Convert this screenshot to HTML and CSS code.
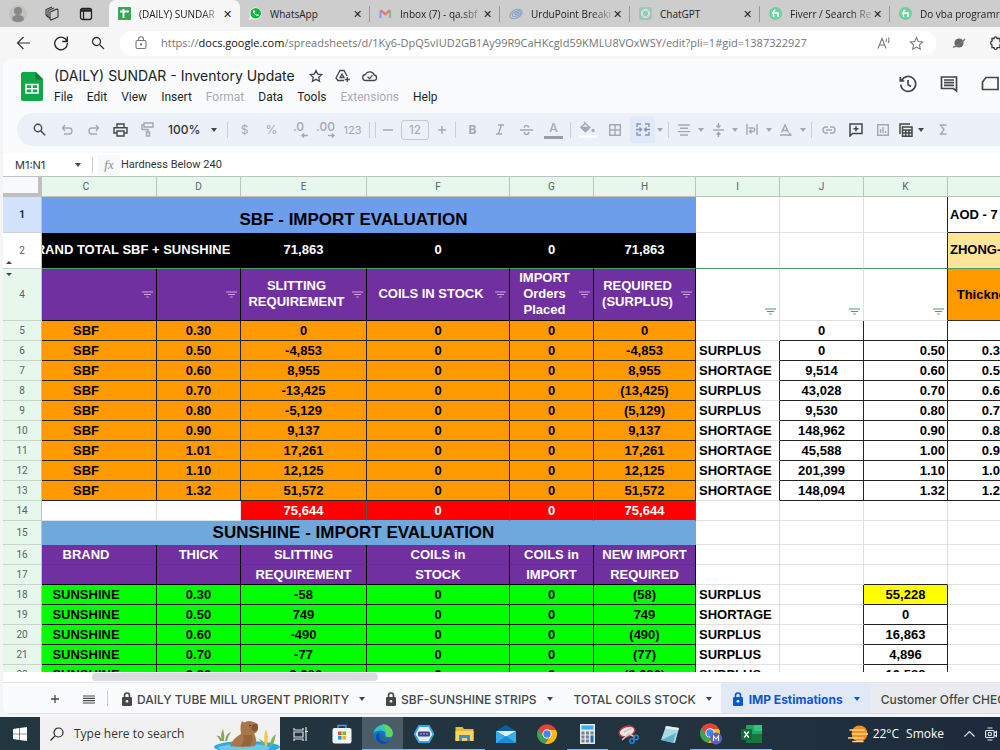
FILE: index.html
```html
<!DOCTYPE html>
<html lang="en">
<head>
<meta charset="utf-8">
<title>(DAILY) SUNDAR - Inventory Update</title>
<link rel="stylesheet" href="styles.css">
</head>
<body>
<div class="tabstrip">
  <button class="win-btn" aria-label="Profile"><svg width="18" height="18" viewBox="0 0 18 18"><circle cx="9" cy="9" r="9" fill="#c3c1be"/><circle cx="9" cy="6" r="4" fill="#8b8784"/><path d="M3 14a6 4 0 0 1 12 0q-1 3-6 3t-6-3z" fill="#8b8784"/></svg></button>
  <button class="win-btn" aria-label="Workspaces"><svg width="16" height="16" viewBox="0 0 16 16" fill="none" stroke="#333" stroke-width="1.1"><path d="M6 6l7-3 1 1v7l-7 3-1-1z"/><path d="M4 11V4.500l6-2.500M2 9V3.500L8 1"/><path d="M2 9l2 2 2 1"/></svg></button>
  <button class="win-btn" aria-label="Tab actions"><svg width="14" height="14" viewBox="0 0 14 14" fill="none" stroke="#222" stroke-width="1.300"><rect x="1.500" y="1.500" width="11" height="11" rx="2"/><path d="M1.500 3.500h11" stroke-width="2.500"/><path d="M4.500 4v8"/></svg></button>
  <div class="tab tab-active"><svg width="13" height="13" viewBox="0 0 13 13"><rect width="13" height="13" rx="1" fill="#34a853"/><path d="M2 4.500h9M5.500 2v9" stroke="#fff" stroke-width="1.800"/></svg><span class="tab-title">(DAILY) SUNDAR</span><button class="close" aria-label="Close tab">✕</button></div>
  <div class="tab"><svg width="13" height="13" viewBox="0 0 13 13"><path d="M0 13l1-4a6 6 0 1 1 3 3z" fill="#fff"/><circle cx="6.700" cy="6.300" r="5.300" fill="#0fb53c"/><path d="M4.500 3.500q-1.500 1.500 1 3.700t4 1.800l.3-1.200-1.500-.7-.8.700q-1.500-.6-2-2l.6-.8-.5-1.500z" fill="#fff"/></svg><span class="tab-title whole">WhatsApp</span><button class="close" aria-label="Close tab">✕</button></div>
  <div class="tab"><svg width="13" height="13" viewBox="0 0 13 13" fill="none" stroke-width="2.200"><path d="M1.500 11V3.500" stroke="#7aa7ea"/><path d="M11 11V3.500" stroke="#7cc08c"/><path d="M1.500 3.200l4.800 4 4.700-4" stroke="#e6796f"/></svg><span class="tab-title">Inbox (7) - qa.sbf</span><button class="close" aria-label="Close tab">✕</button></div>
  <div class="tab"><svg width="14" height="12" viewBox="0 0 14 12" fill="none" stroke="#8fa4cb" stroke-width="1.200"><g transform="rotate(-30 7 6)"><ellipse cx="7" cy="6" rx="6.500" ry="4"/><ellipse cx="7.500" cy="6" rx="4.500" ry="2.300"/><ellipse cx="8" cy="6" rx="2" ry=".8"/></g></svg><span class="tab-title">UrduPoint Breaki</span><button class="close" aria-label="Close tab">✕</button></div>
  <div class="tab"><svg width="13" height="13" viewBox="0 0 13 13"><rect width="13" height="13" rx="2" fill="#9cc7b9"/><g fill="none" stroke="#d5e9e2"><circle cx="6.500" cy="6.500" r="4.200"/><path d="M6.500 3l3 1.800v3.400l-3 1.800-3-1.800V4.800z"/></g></svg><span class="tab-title whole">ChatGPT</span><button class="close" aria-label="Close tab">✕</button></div>
  <div class="tab"><svg width="13" height="13" viewBox="0 0 13 13"><circle cx="6.500" cy="6.500" r="6.500" fill="#6fcf9e"/><path d="M4.500 10V5q0-1.800 2-1.800M3 6h6v4" fill="none" stroke="#fff" stroke-width="1.400"/></svg><span class="tab-title">Fiverr / Search Re</span><button class="close" aria-label="Close tab">✕</button></div>
  <div class="tab"><svg width="13" height="13" viewBox="0 0 13 13"><circle cx="6.500" cy="6.500" r="6.500" fill="#6fcf9e"/><path d="M4.500 10V5q0-1.800 2-1.800M3 6h6v4" fill="none" stroke="#fff" stroke-width="1.400"/></svg><span class="tab-title">Do vba programr</span></div>
</div>

<div class="navbar">
  <button class="nav-btn" aria-label="Back"><svg width="16" height="14" viewBox="0 0 16 14" fill="none" stroke="#333" stroke-width="1.200"><path d="M14 7H1.500M7.500 1l-6 6 6 6"/></svg></button>
  <button class="nav-btn" aria-label="Reload"><svg width="16" height="16" viewBox="0 0 16 16" fill="none" stroke="#222" stroke-width="1.300"><path d="M14 6.500A6.300 6.300 0 1 0 14.300 8M14.300 1.500v5h-5"/></svg></button>
  <button class="nav-btn" aria-label="Search"><svg width="14" height="14" viewBox="0 0 14 14" fill="none" stroke="#333" stroke-width="1.300"><circle cx="5.500" cy="5.500" r="4"/><path d="M8.500 8.500l4.500 4.500"/></svg></button>
  <div class="address">
    <svg width="12" height="14" viewBox="0 0 12 14" fill="none" stroke="#777" stroke-width="1.100"><rect x="1" y="4.500" width="10" height="8" rx="1.500"/><path d="M3.500 4.500V3.200a2.500 2.500 0 0 1 5 0v1.300"/><circle cx="6" cy="8.500" r=".6" fill="#777"/></svg>
    <span class="url">https://<b>docs.google.com</b>/spreadsheets/d/1Ky6-DpQ5vIUD2GB1Ay99R9CaHKcgId59KMLU8VOxWSY/edit?pli=1#gid=1387322927</span>
    <button class="addr-btn" aria-label="Read aloud"><svg width="14" height="14" viewBox="0 0 14 14" fill="none" stroke="#777" stroke-width="1.100"><path d="M1 12.500L5 2.500l4 10M2.500 9h5M9 3q1 1 0 3M11 1.500q2 2.500 0 5.500"/></svg></button>
    <button class="addr-btn" aria-label="Favourite"><svg width="15" height="15" viewBox="0 0 24 24" fill="none" stroke="#777" stroke-width="1.700"><path d="M12 2.500l2.900 6.300 6.900.8-5.100 4.700 1.400 6.800L12 17.700l-6.100 3.400 1.400-6.800L2.200 9.600l6.900-.8z"/></svg></button>
  </div>
  <button class="nav-btn" aria-label="Extension"><svg width="14" height="14" viewBox="0 0 14 14"><circle cx="7" cy="7" r="4.600" fill="#666"/><path d="M1 11q5 0 12-8" fill="none" stroke="#777" stroke-width="1.300"/></svg></button>
  <button class="nav-btn nav-last" aria-label="Extensions"><svg width="14" height="14" viewBox="0 0 14 14" fill="none" stroke="#333" stroke-width="1.300"><path d="M3 2.500h2a1.600 1.600 0 0 1 3.200 0H11v3a1.600 1.600 0 0 1 0 3.200v3H8.200a1.600 1.600 0 0 1-3.200 0H3V9a2 2 0 0 1 0-3.800z"/></svg></button>
</div>

<main class="page">
  <header class="doc-head">
    <svg class="doc-logo" width="22" height="29" viewBox="0 0 22 29"><path d="M2 0h13l7 7v20a2 2 0 0 1-2 2H2a2 2 0 0 1-2-2V2a2 2 0 0 1 2-2z" fill="#0fa94b"/><path d="M14.500 0L22 7.500h-7.500z" fill="#0a7f38"/><path d="M5 12.500h12v8.500H5zM5 16.700h12M11 12.500V21" fill="none" stroke="#fff" stroke-width="1.500"/></svg>
    <div class="doc-names">
      <div class="doc-title"><h1>(DAILY) SUNDAR - Inventory Update</h1>
        <svg width="14" height="14" viewBox="0 0 24 24" fill="none" stroke="#444746" stroke-width="2.200"><path d="M12 2.500l2.900 6.300 6.900.8-5.100 4.700 1.400 6.800L12 17.700l-6.100 3.400 1.400-6.800L2.200 9.600l6.900-.8z"/></svg>
        <svg width="15" height="14" viewBox="0 0 15 14" fill="none" stroke="#444746" stroke-width="1.300"><path d="M9 11.500H2.800L1 9l4-7.500h4L12 7M5 8.500L7 5l2 3.500zM12.300 8v5M9.800 10.500h5"/></svg>
        <svg width="16" height="12" viewBox="0 0 16 12" fill="none" stroke="#444746" stroke-width="1.300"><path d="M4 10.500a3 3 0 0 1-.5-6A4.800 4.800 0 0 1 12.300 5a2.800 2.800 0 0 1 0 5.500zM5.500 6.800l2 1.800 3-3.200"/></svg>
      </div>
      <nav class="menus"><button>File</button><button>Edit</button><button>View</button><button>Insert</button><button class="off">Format</button><button>Data</button><button>Tools</button><button class="off">Extensions</button><button>Help</button></nav>
    </div>
    <div class="doc-actions">
      <button aria-label="History"><svg width="18" height="18" viewBox="0 0 18 18" fill="none" stroke="#444746" stroke-width="1.700"><path d="M2.500 5.500a7.500 7.500 0 1 1-.8 4M1.300 2v4h4M9 5v4.500l3 2"/></svg></button>
      <button aria-label="Comments"><svg width="18" height="18" viewBox="0 0 18 18" fill="none" stroke="#444746" stroke-width="1.700"><path d="M1.500 2h15v14l-3-2.500h-12zM4 5h10M4 7.700h10M4 10.400h10" /></svg></button>
      <button aria-label="Meet"><svg width="18" height="16" viewBox="0 0 18 16" fill="none" stroke="#444746" stroke-width="1.700"><path d="M5 1.500h12v12H1.500V6z"/></svg></button>
    </div>
  </header>

  <div class="toolbar">
    <button class="t on" aria-label="Search menus"><svg width="13" height="13" viewBox="0 0 13 13" fill="none" stroke="#444746" stroke-width="1.600"><circle cx="5" cy="5" r="3.700"/><path d="M7.700 7.700l4.500 4.500"/></svg></button>
    <button class="t" aria-label="Undo"><svg width="12" height="12" viewBox="0 0 12 12"><path d="M4 1L1.500 4 4 7M1.500 4H8a3 3 0 0 1 0 6H3"/></svg></button>
    <button class="t" aria-label="Redo"><svg width="12" height="12" viewBox="0 0 12 12"><path d="M8 1l2.500 3L8 7M10.500 4H4a3 3 0 0 0 0 6h5"/></svg></button>
    <button class="t on" aria-label="Print"><svg width="15" height="14" viewBox="0 0 15 14" fill="none" stroke="#444746" stroke-width="1.500"><path d="M4 4V1h7v3M4 10H1V4.800h13V10h-3M4 8h7v5H4z"/></svg></button>
    <button class="t" aria-label="Paint format"><svg width="13" height="15" viewBox="0 0 13 15"><path d="M3 1h9v4H3zM3 3H1v4.500h6V10M5.500 10h3v4h-3z"/></svg></button>
    <button class="zoom">100% <i class="arrow"></i></button>
    <i class="sep"></i>
    <button class="t">$</button><button class="t">%</button>
    <button class="t dec">.0<svg width="7" height="5" viewBox="0 0 7 5"><path d="M7 2.500H1M3 .5l-2 2 2 2"/></svg></button>
    <button class="t dec">.00<svg width="7" height="5" viewBox="0 0 7 5"><path d="M0 2.500h6M4 .5l2 2-2 2"/></svg></button>
    <button class="t num">123</button>
    <i class="sep"></i><i class="sep tight"></i>
    <button class="t small" aria-label="Decrease font size"><svg width="10" height="10" viewBox="0 0 10 10"><path d="M0 5h10"/></svg></button>
    <input class="size" value="12" aria-label="Font size">
    <button class="t small" aria-label="Increase font size"><svg width="10" height="10" viewBox="0 0 10 10"><path d="M1 5h8M5 1v8"/></svg></button>
    <i class="sep"></i>
    <button class="t bold">B</button>
    <button class="t" aria-label="Italic"><svg width="10" height="11" viewBox="0 0 10 11"><path d="M3 1h6M1 10h6M6.500 1l-3 9"/></svg></button>
    <button class="t" aria-label="Strikethrough"><svg width="13" height="12" viewBox="0 0 13 12"><path d="M0 6h13M9 3.500Q8.500 1.500 6.500 1.500T4 3.500M4 8q.5 2.500 2.500 2.500T9 8"/></svg></button>
    <button class="t textcol"><span>A</span></button>
    <i class="sep"></i>
    <button class="t" aria-label="Fill colour"><svg width="18" height="17" viewBox="0 0 18 17"><path d="M5 1l5.500 5.500-4 4-4.500-4L6 2.500"/><path d="M2.500 6.500h8l-4 4z" fill="#a4a9b1"/><circle cx="14" cy="9.500" r="1" fill="#a4a9b1"/><path d="M0 15.500h18" stroke="#fff" stroke-width="2.500"/></svg></button>
    <button class="t" aria-label="Borders"><svg width="12" height="12" viewBox="0 0 12 12"><path d="M.7.700h10.600v10.600H.7zM6 .7v10.600M.7 6h10.600"/></svg></button>
    <button class="t merge" aria-label="Merge cells"><svg width="14" height="13" viewBox="0 0 14 13"><path d="M5 1H1v3M1 9v3h4M9 1h4v3M13 9v3H9M0 6.500h5M3.500 4.500l2 2-2 2M14 6.500H9M10.500 4.500l-2 2 2 2"/></svg></button><i class="arrow off"></i>
    <i class="sep"></i>
    <button class="t drop" aria-label="Horizontal align"><svg width="12" height="12" viewBox="0 0 12 12"><path d="M0 1h12M2 4.300h8M0 7.600h12M2 11h8"/></svg></button><i class="arrow off"></i>
    <button class="t drop" aria-label="Vertical align"><svg width="11" height="14" viewBox="0 0 11 14"><path d="M0 7h11M5.500 0v4M3.500 2.500l2 2 2-2M5.500 14v-4M3.500 11.500l2-2 2 2"/></svg></button><i class="arrow off"></i>
    <button class="t drop" aria-label="Wrapping"><svg width="12" height="11" viewBox="0 0 12 11"><path d="M1 0v11M11 0v11M2.500 4H7a1.700 1.700 0 0 1 0 3.500H4M5.500 5.500l-2 2 2 2"/></svg></button><i class="arrow off"></i>
    <button class="t drop" aria-label="Rotation"><svg width="12" height="12" viewBox="0 0 12 12"><path d="M1.500 8.500L5 1l3.500 7.500M2.500 6.500h5M0 11h10M9 9l2 2-2 1"/></svg></button><i class="arrow off"></i>
    <i class="sep"></i>
    <button class="t" aria-label="Insert link"><svg width="14" height="8" viewBox="0 0 14 8"><path d="M6 1H4a3 3 0 0 0 0 6h2M8 1h2a3 3 0 0 1 0 6H8M4 4h6"/></svg></button>
    <button class="t" aria-label="Insert comment"><svg width="14" height="14" viewBox="0 0 14 14" class="dark"><path d="M1 13V1h12v9.500H3.500zM7 3.300v5M4.500 5.800h5"/></svg></button>
    <button class="t" aria-label="Insert chart"><svg width="12" height="12" viewBox="0 0 12 12"><path d="M.7.700h10.600v10.600H.7zM3.500 5v4M6 3v6M8.500 7v2"/></svg></button>
    <button class="t small" aria-label="Filter views"><svg width="14" height="14" viewBox="0 0 14 14" class="dark"><path d="M1 11V1h10M3.500 4h9.500v9.200H3.500zM3.500 7h9.500M3.500 10h9.500M6.700 7v6M9.900 7v6"/></svg></button><i class="arrow"></i>
    <button class="t sigma" aria-label="Functions"><svg width="8" height="11" viewBox="0 0 8 11"><path d="M7.500 1H1.500L5 5.500 1.500 10h6"/></svg></button>
  </div>

  <div class="formula">
    <input class="namebox" value="M1:N1" aria-label="Name box"><i class="arrow"></i><i class="sep"></i>
    <span class="fx">fx</span><input class="fvalue" value="Hardness Below 240" aria-label="Formula">
  </div>

  <div class="sheet">
    <table class="rowheads">
      <tr class="head"><th class="corner"></th></tr>
      <tr class="r36"><th class="sel">1</th></tr>
      <tr class="r36"><th class="plain">2<i class="up"></i></th></tr>
      <tr class="r52"><th>4<i class="down"></i></th></tr>
      <tr><th>5</th></tr><tr><th>6</th></tr><tr><th>7</th></tr><tr><th>8</th></tr><tr><th>9</th></tr><tr><th>10</th></tr><tr><th>11</th></tr><tr><th>12</th></tr><tr><th>13</th></tr><tr><th>14</th></tr>
      <tr class="r24"><th>15</th></tr>
      <tr><th>16</th></tr><tr><th>17</th></tr><tr><th>18</th></tr><tr><th>19</th></tr><tr><th>20</th></tr><tr><th>21</th></tr><tr><th>22</th></tr>
    </table>
    <div class="cells">
      <table class="grid">
        <colgroup><col class="w-c"><col class="w-s"><col class="w-e"><col class="w-f"><col class="w-s"><col class="w-h"><col class="w-s"><col class="w-s"><col class="w-s"><col class="w-l"></colgroup>
        <tr class="head"><th>C</th><th>D</th><th>E</th><th>F</th><th>G</th><th>H</th><th>I</th><th>J</th><th>K</th><th></th></tr>
        <tr class="r36"><td colspan="6" class="title blue low">SBF - IMPORT EVALUATION</td><td></td><td></td><td class="rk"></td><td class="left bk">AOD - 7</td></tr>
        <tr class="r36 total"><td colspan="2" class="black">GRAND TOTAL SBF + SUNSHINE</td><td class="black">71,863</td><td class="black">0</td><td class="black">0</td><td class="black">71,863</td><td></td><td></td><td class="rk"></td><td class="left cream">ZHONG-</td></tr>
        <tr class="r52 filters">
          <td class="purple"><div class="f"><span></span><svg><use href="#funnel"/></svg></div></td>
          <td class="purple"><div class="f"><span></span><svg><use href="#funnel"/></svg></div></td>
          <td class="purple"><div class="f"><span>SLITTING REQUIREMENT</span><svg><use href="#funnel"/></svg></div></td>
          <td class="purple"><div class="f"><span>COILS IN STOCK</span><svg><use href="#funnel"/></svg></div></td>
          <td class="purple"><div class="f"><span>IMPORT Orders Placed</span><svg><use href="#funnel"/></svg></div></td>
          <td class="purple"><div class="f"><span>REQUIRED (SURPLUS)</span><svg><use href="#funnel"/></svg></div></td>
          <td class="low"><div class="f green"><span></span><svg><use href="#funnel"/></svg></div></td>
          <td class="low"><div class="f green"><span></span><svg><use href="#funnel"/></svg></div></td>
          <td class="low rk"><div class="f green"><span></span><svg><use href="#funnel"/></svg></div></td>
          <td class="orange thick">Thickness</td></tr>
        <tr class="o"><td>SBF</td><td>0.30</td><td>0</td><td>0</td><td>0</td><td>0</td><td></td><td class="bk rk">0</td><td class="bk rk"></td><td class="bk"></td></tr>
        <tr class="o b"><td>SBF</td><td>0.50</td><td>-4,853</td><td>0</td><td>0</td><td>-4,853</td><td>SURPLUS</td><td>0</td><td>0.50</td><td>0.30</td></tr>
        <tr class="o b"><td>SBF</td><td>0.60</td><td>8,955</td><td>0</td><td>0</td><td>8,955</td><td>SHORTAGE</td><td>9,514</td><td>0.60</td><td>0.50</td></tr>
        <tr class="o b"><td>SBF</td><td>0.70</td><td>-13,425</td><td>0</td><td>0</td><td>(13,425)</td><td>SURPLUS</td><td>43,028</td><td>0.70</td><td>0.60</td></tr>
        <tr class="o b"><td>SBF</td><td>0.80</td><td>-5,129</td><td>0</td><td>0</td><td>(5,129)</td><td>SURPLUS</td><td>9,530</td><td>0.80</td><td>0.70</td></tr>
        <tr class="o b"><td>SBF</td><td>0.90</td><td>9,137</td><td>0</td><td>0</td><td>9,137</td><td>SHORTAGE</td><td>148,962</td><td>0.90</td><td>0.80</td></tr>
        <tr class="o b"><td>SBF</td><td>1.01</td><td>17,261</td><td>0</td><td>0</td><td>17,261</td><td>SHORTAGE</td><td>45,588</td><td>1.00</td><td>0.90</td></tr>
        <tr class="o b"><td>SBF</td><td>1.10</td><td>12,125</td><td>0</td><td>0</td><td>12,125</td><td>SHORTAGE</td><td>201,399</td><td>1.10</td><td>1.00</td></tr>
        <tr class="o b"><td>SBF</td><td>1.32</td><td>51,572</td><td>0</td><td>0</td><td>51,572</td><td>SHORTAGE</td><td>148,094</td><td>1.32</td><td>1.20</td></tr>
        <tr><td></td><td></td><td class="red">75,644</td><td class="red">0</td><td class="red">0</td><td class="red">75,644</td><td></td><td></td><td></td><td></td></tr>
        <tr class="r24"><td colspan="6" class="title sky">SUNSHINE - IMPORT EVALUATION</td><td></td><td></td><td></td><td></td></tr>
        <tr><td class="purple nb">BRAND</td><td class="purple nb">THICK</td><td class="purple nb">SLITTING</td><td class="purple nb">COILS in</td><td class="purple nb">COILS in</td><td class="purple nb">NEW IMPORT</td><td></td><td></td><td></td><td></td></tr>
        <tr><td class="purple"></td><td class="purple"></td><td class="purple">REQUIREMENT</td><td class="purple">STOCK</td><td class="purple">IMPORT</td><td class="purple">REQUIRED</td><td></td><td></td><td class="bk"></td><td></td></tr>
        <tr class="g"><td>SUNSHINE</td><td>0.30</td><td>-58</td><td>0</td><td>0</td><td>(58)</td><td>SURPLUS</td><td></td><td class="yellow">55,228</td><td></td></tr>
        <tr class="g"><td>SUNSHINE</td><td>0.50</td><td>749</td><td>0</td><td>0</td><td>749</td><td>SHORTAGE</td><td></td><td>0</td><td></td></tr>
        <tr class="g"><td>SUNSHINE</td><td>0.60</td><td>-490</td><td>0</td><td>0</td><td>(490)</td><td>SURPLUS</td><td></td><td>16,863</td><td></td></tr>
        <tr class="g"><td>SUNSHINE</td><td>0.70</td><td>-77</td><td>0</td><td>0</td><td>(77)</td><td>SURPLUS</td><td></td><td>4,896</td><td></td></tr>
        <tr class="g"><td>SUNSHINE</td><td>0.80</td><td>-2,686</td><td>0</td><td>0</td><td>(2,686)</td><td>SURPLUS</td><td></td><td>10,588</td><td></td></tr>
      </table>
    </div>
  </div>
  <div class="hscroll"><i class="thumb"></i></div>

  <footer class="sheets">
    <button class="s-btn" aria-label="Add sheet"><svg width="10" height="10" viewBox="0 0 10 10" stroke="#444746" stroke-width="1.300"><path d="M1 5h8M5 1v8"/></svg></button>
    <button class="s-btn" aria-label="All sheets"><svg width="12" height="9" viewBox="0 0 12 9" stroke="#444746" stroke-width="1.200"><path d="M0 1h12M0 3.300h12M0 5.700h12M0 8h12"/></svg></button>
    <i class="sep"></i>
    <button class="s-tab"><svg class="lock"><use href="#lock"/></svg>DAILY TUBE MILL URGENT PRIORITY<i class="arrow"></i></button>
    <button class="s-tab"><svg class="lock"><use href="#lock"/></svg>SBF-SUNSHINE STRIPS<i class="arrow"></i></button>
    <button class="s-tab">TOTAL COILS STOCK<i class="arrow"></i></button>
    <button class="s-tab current"><svg class="lock"><use href="#lock"/></svg>IMP Estimations<i class="arrow"></i></button>
    <button class="s-tab next">Customer Offer CHECK</button>
  </footer>
</main>

<div class="taskbar">
  <button class="start" aria-label="Start"><svg width="14" height="14" viewBox="0 0 14 14" fill="#fff"><path d="M0 2l6-.9v5.600H0zM6.600 1L14 0v6.700H6.600zM0 7.300h6v5.600L0 12zM6.600 7.300H14V14l-7.400-1z"/></svg></button>
  <label class="search">
    <svg width="14" height="14" viewBox="0 0 14 14" fill="none" stroke="#222" stroke-width="1.200"><circle cx="8.500" cy="5.500" r="4.500"/><path d="M5.300 8.700L.5 13.500"/></svg>
    <input type="text" placeholder="Type here to search" aria-label="Type here to search">
    <svg class="capy" width="66" height="30" viewBox="0 0 66 30"><ellipse cx="33" cy="27" rx="33" ry="6" fill="#31a8dd"/><ellipse cx="30" cy="28" rx="26" ry="4" fill="#6cc9ec"/><path d="M8 21Q6 14 9 9q2 6 1 12zM11 21q1-8 6-9-3 4-4 9zM6 21q-2-5-4-5 5-1 6 5z" fill="#7fa858"/><path d="M16 26q3-8 11-12-1-6 0-10l1-3 2 1.500Q34 0 38 1.500l4 1.500q2.500 1 2 5 0 3-2 4.500l-2 1q4 7 1 12.500-12 2-25 0z" fill="#a9764a"/><path d="M39 4l4 0q1.500 3 0 6.500l-3 1-3-3z" fill="#84532f"/><path d="M29 15q3 7-3 11h10q4-5 2-11z" fill="#96653d"/><circle cx="36" cy="5.500" r=".8" fill="#222"/><path d="M51 26q-2-9 1-17 3 8 1 17z" fill="#f0c64c"/><path d="M56 26q0-8 6-12-1 7-4 12zM49 26q-2-6-5-7 6 1 7 7z" fill="#84b25a"/></svg>
  </label>
  <button class="app" aria-label="Task view"><svg width="15" height="14" viewBox="0 0 15 14" fill="none" stroke="#dfe3e5" stroke-width="1.200"><path d="M1 1v2h9V1M1 5h9v5H1zM1 14v-2h9v2M13 0v14M12 4.500h3"/></svg></button>
  <button class="app" aria-label="Store"><svg width="20" height="20" viewBox="0 0 20 20"><path d="M6 5V1.500h8V5" fill="none" stroke="#35a6e6" stroke-width="1.500"/><rect x=".5" y="4" width="19" height="15.500" rx="2" fill="#f4f5f5"/><path d="M6 7.500h3.600v3.600H6z" fill="#e8502d"/><path d="M10.400 7.500H14v3.600h-3.600z" fill="#7fba00"/><path d="M6 12h3.600v3.600H6z" fill="#00a4ef"/><path d="M10.400 12H14v3.600h-3.600z" fill="#ffb900"/></svg></button>
  <button class="app live focus" aria-label="Edge"><svg width="20" height="20" viewBox="0 0 20 20"><circle cx="10" cy="10" r="9.800" fill="#1273c9"/><path d="M.5 9A9.800 9.800 0 0 1 19.800 9q.3 4-4 4-3.500 0-3.300-2 .5-4-4.500-4.500-5 0-7.500 2.500z" fill="#37c5b5"/><path d="M9 .4a9.800 9.800 0 0 1 10.800 9q0 3.600-4 3.600-3.300 0-3-2Q14 5 9 .4z" fill="#63d65b"/><path d="M7 9q-2 5 2.500 8 4 2 8-1-3 4-8 4Q2 18 3 12q1-3 4-3z" fill="#0f4f9e"/><path d="M9.500 9.500q-1 4 3 5 3 .6 5-.500-2 2.500-5 2.500-4-.5-4.500-4.500 0-1.500 1.500-2.500z" fill="#4b5c66"/></svg></button>
  <button class="app live" aria-label="IRP"><svg width="20" height="18" viewBox="0 0 20 18"><path d="M5 1h10l4.500 8L15 17H5L.5 9z" fill="#e6eef5" stroke="#35a5dd" stroke-width="1.800"/><rect x="4" y="6.500" width="12" height="5" rx="1.500" fill="#3a3f8f"/><path d="M6 9h8" stroke="#b9bce6" stroke-width="1.200" stroke-dasharray="2 1"/></svg></button>
  <button class="app live" aria-label="Files"><svg width="19" height="16" viewBox="0 0 19 16"><path d="M.5 1h7l1.500 2h9.500v12H.5z" fill="#f2b630"/><path d="M.5 5h18v10H.5z" fill="#fcd462"/><path d="M4 9h11v6h-3v-3H7v3H4z" fill="#3a8fdc"/></svg></button>
  <button class="app" aria-label="Mail"><svg width="20" height="18" viewBox="0 0 20 18"><path d="M0 6l10-6 10 6v12H0z" fill="#0f5fa8"/><path d="M2 6l8 5 8-5-8 3z" fill="#e9f2f8"/><path d="M0 6h20L10 12z" fill="#e9f2f8"/><path d="M0 6l10 6 10-6v12H0z" fill="#35b0ef"/><path d="M0 18l10-7 10 7z" fill="#1b8cd8"/></svg></button>
  <button class="app" aria-label="Chrome"><svg width="20" height="20" viewBox="0 0 20 20"><use href="#chrome"/></svg></button>
  <button class="app live" aria-label="Calculator"><svg width="15" height="20" viewBox="0 0 15 20"><rect width="15" height="20" fill="#e4e8eb"/><path d="M1.500 1.500h12v4h-12z" fill="#38b1e8"/><path d="M1.500 7.500h3v3h-3zM6 7.500h3v3H6zM10.500 7.500h3v3h-3zM1.500 11.500h3v3h-3zM6 11.500h3v3H6zM1.500 15.500h3v3h-3zM6 15.500h3v3H6z" fill="#76828c"/><path d="M10.500 11.500h3v7h-3z" fill="#1f6cb3"/></svg></button>
  <button class="app" aria-label="Snip"><svg width="21" height="19" viewBox="0 0 21 19"><ellipse cx="9" cy="6.500" rx="8" ry="5" transform="rotate(-18 9 6.500)" fill="#e9e4e4" stroke="#c9393f" stroke-width="1.500"/><path d="M6 7l8-4M4 15l7-6 6 3" stroke="#c5cbd0" stroke-width="1.500" fill="none"/><circle cx="14" cy="16" r="2.200" fill="none" stroke="#2b86d0" stroke-width="1.500"/><circle cx="18" cy="12.500" r="2.200" fill="none" stroke="#2b86d0" stroke-width="1.500"/></svg></button>
  <button class="app" aria-label="Notepad"><svg width="20" height="19" viewBox="0 0 20 19"><path d="M6 1l13 2-4 15L1 15z" fill="#a9dbe6"/><path d="M6 1l13 2-.6 2.300L5 3.500z" fill="#e3edf0"/><path d="M16 8l-3 10L1 15z" fill="#5fb3c8"/></svg></button>
  <button class="app live" aria-label="Chrome profile"><svg width="22" height="22" viewBox="0 0 22 22"><use href="#chrome"/><circle cx="16" cy="15.500" r="6" fill="#5a62bd"/><path d="M13.500 18v-5l2.500 3 2.500-3v5" fill="none" stroke="#fff" stroke-width="1.100"/></svg></button>
  <button class="app live" aria-label="Excel"><svg width="21" height="18" viewBox="0 0 21 18"><rect x="5" width="16" height="18" rx="1" fill="#21a366"/><path d="M13 0h8v6h-8z" fill="#33c481"/><path d="M5 9h16v9H5z" fill="#15783f"/><rect y="4" width="11" height="11" rx="1" fill="#0f6b39"/><path d="M3.300 6.500l4.400 6M7.700 6.500l-4.400 6" stroke="#fff" stroke-width="1.500"/></svg></button>
  <div class="tray">
    <svg width="20" height="18" viewBox="0 0 20 18"><circle cx="11.500" cy="8.500" r="8" fill="#f58f1e"/><path d="M2 5h14M5 9h15M0 13h15M5 16.500h10" stroke="#ffd58a" stroke-width="1.600" stroke-linecap="round"/></svg>
    <span>22°C</span><span>Smoke</span>
    <svg class="chev" width="11" height="7" viewBox="0 0 11 7" fill="none" stroke="#e8eaec" stroke-width="1.200"><path d="M.5 6.500l5-5 5 5"/></svg>
    <svg width="12" height="14" viewBox="0 0 12 14" fill="none" stroke="#e8eaec" stroke-width="1.100"><rect x=".6" y="3.500" width="8.500" height="7" rx="1"/><circle cx="4.800" cy="7" r="1.700"/><path d="M9 6l2.500-1.500v5L9 8M2.500 1h5M2.500 13h5"/></svg>
  </div>
</div>

<svg class="defs" aria-hidden="true"><defs>
  <symbol id="funnel" viewBox="0 0 11 8"><path d="M0 1h11M2 3.500h7M4.300 6h2.400" stroke="currentColor" stroke-width="1.200"/></symbol>
  <symbol id="lock" viewBox="0 0 10 14"><path d="M2.500 6V3.500a2.500 2.500 0 0 1 5 0V6" fill="none" stroke="currentColor" stroke-width="1.600"/><rect y="5" width="10" height="9" rx="1.200" fill="currentColor"/><circle cx="5" cy="9.300" r="1.300" fill="#f9fbfd"/></symbol>
  <symbol id="chrome" viewBox="0 0 20 20" width="20" height="20"><circle cx="10" cy="10" r="9.800" fill="#ea4335"/><path d="M1.500 5L6 12.500l4 2.500-2 4.700A9.800 9.800 0 0 1 1.500 5z" fill="#34a853"/><path d="M19 6a9.800 9.800 0 0 1-11 13.700l5.500-7.200L12 6z" fill="#fbbc05"/><circle cx="10" cy="10" r="4.700" fill="#fff"/><circle cx="10" cy="10" r="3.700" fill="#4285f4"/></symbol>
</defs></svg>
</body>
</html>
```
FILE: styles.css
```css
* { box-sizing: border-box; }
html, body { height: 100%; }
body { margin: 0; display: flex; flex-direction: column; overflow: hidden; background: #f5f5f5; font-family: "Open Sans", "Noto Sans", sans-serif; color: #222; }
button { border: 0; background: none; padding: 0; margin: 0; font: inherit; color: inherit; display: flex; align-items: center; justify-content: center; flex: none; white-space: nowrap; }
input { border: 0; background: none; padding: 0; margin: 0; font: inherit; color: inherit; outline: 0; min-width: 0; }
svg { flex: none; display: block; }
i { font-style: normal; flex: none; }
.defs { width: 0; height: 0; position: absolute; }

/* browser tabs */
.tabstrip { display: flex; flex: none; height: 27px; background: #cdcdcd; font-size: 10px; padding-left: 1px; }
.win-btn { width: 34px; }
.tab { flex: none; width: 130px; padding: 0 7px 0 9px; display: flex; align-items: center; gap: 8px; position: relative; }
.tab:not(.tab-active)::after { content: ""; position: absolute; right: 0; top: 6px; height: 16px; width: 1px; background: #999; }
.tab-active { background: #f7f7f7; border-radius: 7px 7px 0 0; margin-left: 6px; width: 131px; }
.tab-title { flex: 1; margin-right: -7px; overflow: hidden; white-space: nowrap; line-height: 16px; mask-image: linear-gradient(90deg, #000 75%, #0003); }
.tab-title.whole { mask-image: none; }
.close { width: 11px; font-size: 11px; color: #222; }

.navbar { display: flex; flex: none; height: 32px; background: #f7f7f7; align-items: center; padding-left: 5px; }
.nav-btn { width: 37px; height: 26px; }
.nav-last { margin-right: -14px; }
.address { flex: 1; min-width: 0; height: 25px; border-radius: 13px; background: #fff; margin: 0 4px; padding: 0 7px 0 15px; display: flex; align-items: center; gap: 8px; }
.url { flex: 1; overflow: hidden; white-space: nowrap; font-size: 11px; color: #757575; line-height: 18px; margin-left: 6px; }
.url b { font-weight: 400; color: #111; }
.addr-btn { width: 25px; height: 24px; }

/* spreadsheet page */
.page { flex: 1; min-height: 0; display: flex; flex-direction: column; margin: 0 0 3px 3px; background: #f9fbfd; border-radius: 7px 0 0 7px; overflow: hidden; font-family: Inter, "Open Sans", sans-serif; color: #1f1f1f; }
.doc-head { display: flex; flex: none; height: 54px; padding: 7px 0 0 18px; }
.doc-logo { margin-top: 6px; }
.doc-names { flex: 1; padding-left: 11px; }
.doc-title { display: flex; align-items: center; gap: 12px; height: 20px; }
.doc-title h1 { margin: 0 2px 0 0; font-size: 14px; line-height: 20px; font-weight: 400; color: #222; }
.menus { display: flex; gap: 14px; font-size: 12px; line-height: 18px; margin-top: 2px; font-family: Roboto, sans-serif; }
.off { color: #a7acb2; }
.doc-actions { display: flex; padding-top: 8px; margin-right: -10px; align-items: flex-start; }
.doc-actions button { width: 41px; height: 20px; }

.toolbar { display: flex; flex: none; height: 33px; margin-left: 14px; padding-left: 9px; background: #ecf0f9; border-radius: 17px 0 0 17px; align-items: center; color: #a4a9b1; font-size: 12px; overflow: hidden; }
.t { width: 27px; height: 26px; }
.t svg:not(.dark) { fill: none; stroke: #a4a9b1; stroke-width: 1.400; }
.t.on svg:not(.dark) { stroke: #444746; }
.t svg.dark { fill: none; stroke: #444746; stroke-width: 1.500; }
.t.small { width: 20px; }
.t.drop { width: 24px; }
.t.merge { width: 25px; margin-left: 2px; background: #dfe9f9; border-radius: 3px; }
.t.merge svg:not(.dark) { stroke: #8795b0; }
.t.dec { flex-direction: column; align-items: center; line-height: 12px; font-weight: 500; }
.t.dec svg { align-self: flex-end; margin-right: 4px; }
.t.num { font-size: 11px; }
.t.bold { font-weight: 700; }
.t.sigma { margin-left: 3px; }
.textcol span { border-bottom: 3px solid #999ea6; width: 19px; line-height: 16px; font-weight: 500; }
.zoom { width: 63px; color: #333; font-size: 12px; font-weight: 500; justify-content: flex-start; padding-left: 7px; gap: 9px; }
.sep { width: 1px; height: 16px; background: #c9cdd4; margin: 0 3px; }
.sep.tight { margin: 0 2px; }
.arrow { width: 10px; display: flex; justify-content: center; }
.arrow::before { content: ""; border: 3px solid transparent; border-top: 4px solid #444746; border-bottom: 0; }
.arrow.off::before { border-top-color: #a4a9b1; }
.size { width: 28px; height: 20px; margin: 0 3px; border: 1px solid #c4c8cf; border-radius: 3px; text-align: center; }

.formula { display: flex; flex: none; height: 23px; margin-top: 7px; background: #fff; align-items: center; font-size: 11px; padding-left: 12px; color: #333; font-family: Inter, sans-serif; }
.namebox { width: 58px; }
.formula .sep { margin: 0 5px 0 9px; }
.fx { width: 22px; text-align: center; font: italic 13px/20px "Liberation Serif", serif; color: #8a8f94; background: #f8f9fa; }
.fvalue { flex: 1; padding-left: 1px; font-family: Roboto, sans-serif; }

/* cells */
.sheet { display: flex; flex: 1; min-height: 0; overflow: hidden; background: #fff; border-top: 1px solid #c0c0c0; }
table { border-collapse: separate; border-spacing: 0; table-layout: fixed; flex: none; }
.rowheads { width: 39px; }
td, th { padding: 0; height: 20px; overflow: hidden; white-space: nowrap; }
th { background: #e6f7ec; color: #5c6064; font: 400 10px/19px Roboto, sans-serif; border-right: 1px solid #c0c0c0; border-bottom: 1px solid #ccd2ce; position: relative; text-align: center; }
.head th { border-bottom-color: #c0c0c0; height: 20px; }
.head .corner { background: #f8f9fa; border-right: 4px solid #bfbfbf; border-bottom: 4px solid #bfbfbf; line-height: 16px; }
.rowheads .sel { background: #d3e3fd; color: #0b2a50; font-weight: 700; }
.rowheads .plain { background: #fff; }
.r36 td, .r36 th { height: 36px; }
.r52 td, .r52 th { height: 52px; }
.r24 td, .r24 th { height: 24px; }
.up, .down { position: absolute; left: 3px; border: 3px solid transparent; }
.up { bottom: 4px; border-top: 0; border-bottom-color: #444; }
.down { top: 4px; border-bottom: 0; border-top-color: #444; }

.cells { flex: 1; min-width: 0; overflow: hidden; }
.grid { width: 1018px; margin-left: -26px; }
.w-c { width: 141px; }
.w-s { width: 84px; }
.w-e { width: 126px; }
.w-f { width: 143px; }
.w-h { width: 102px; }
.w-l { width: 94px; }
td { font: 700 13px/16px "Liberation Sans", Arial, sans-serif; color: #000; text-align: center; border-right: 1px solid #e1e1e1; border-bottom: 1px solid #e1e1e1; }
.title { font-size: 17px; padding-right: 4px; }
.low { vertical-align: bottom; }
.blue { background: #6d9eeb; border-color: #6d9eeb; padding-bottom: 4px; }
.sky { background: #6fa8dc; border-color: #6fa8dc; }
.black { background: #000; color: #fff; border-color: #000; }
.total td { border-bottom-color: #4b9c66; padding-bottom: 2px; }
.cream { background: #ffe599; }
.left { text-align: left; padding-left: 2px; }
.purple { background: #7030a0; color: #fff; border-color: #000; }
.nb { border-bottom-color: #68299a; }
.orange { background: #ff9900; border-bottom-color: #333; }
.thick { padding-right: 12px; }
.red { background: #f00; color: #fff; border-right-color: #555; border-bottom-color: #6fa8dc; }
.yellow { background: #ff0; }
.bk { border-bottom-color: #222; }
.rk { border-right-color: #222; }
.f { display: flex; align-items: center; white-space: normal; padding: 0 3px 2px 0; line-height: 16px; }
.f span { flex: 1; }
.f svg { width: 11px; height: 8px; color: #c9a9e0; margin: 2px 0 0; }
.f.green { padding-bottom: 4px; }
.f.green svg { color: #4b9c66; }
.o td:nth-child(-n+6) { background: #ff9900; border-color: #222; }
.b td:nth-child(n+7) { border-right-color: #222; }
.b td:nth-child(n+8) { border-bottom-color: #222; }
.b td:nth-child(7), .g td:nth-child(7) { text-align: left; padding-left: 3px; }
.b td:nth-child(9) { text-align: right; padding-right: 2px; }
.g td:nth-child(-n+6) { background: #0f0; border-color: #111; }
.g td:nth-child(8) { border-right-color: #222; }
.g td:nth-child(9) { border-color: #222; }

.hscroll { flex: none; height: 11px; background: #fff; padding: 1px 0 0 89px; border-bottom: 1px solid #e3e5e8; }
.thumb { display: block; width: 286px; height: 8px; border-radius: 4px; background: #dadce0; }

.sheets { display: flex; flex: none; height: 31px; align-items: stretch; font-size: 12px; font-weight: 500; color: #444746; padding-left: 35px; border-bottom: 1px solid #dcdfe3; }
.s-btn { width: 34px; padding-top: 2px; }
.sheets .sep { align-self: center; margin: 0 2px 0 1px; }
.s-tab { padding: 2px 7px 0 12px; gap: 5px; }
.s-tab .arrow { margin-left: 3px; }
.lock { width: 10px; height: 14px; }
.current { background: #e1e9f7; color: #0b57d0; font-weight: 700; padding-right: 9px; gap: 6px; }
.current .arrow::before { border-top-color: #0b57d0; }
.next { flex: 1; justify-content: flex-start; background: #e9ebee; padding-left: 10px; }

/* desktop taskbar */
.taskbar { display: flex; flex: none; height: 33px; background: linear-gradient(90deg, #22363f, #22333f 70%, #1d2a3c); }
.start { width: 40px; }
.search { width: 240px; flex: none; background: #f1f1f1; display: flex; align-items: center; padding-left: 10px; gap: 10px; font-size: 12px; overflow: hidden; }
.search input { flex: 1; }
.search input::placeholder { color: #333; opacity: 1; }
.capy { align-self: flex-end; }
.app { width: 41px; padding-top: 1px; }
.live { border-bottom: 1px solid #76b9ed; }
.focus { background: #4b5c66; }
.tray { margin-left: auto; display: flex; align-items: center; gap: 7px; color: #fff; font-size: 12px; padding-right: 3px; }
.tray svg:first-child { margin-right: -2px; }
.chev { margin: 0 3px 0 13px; }
```
